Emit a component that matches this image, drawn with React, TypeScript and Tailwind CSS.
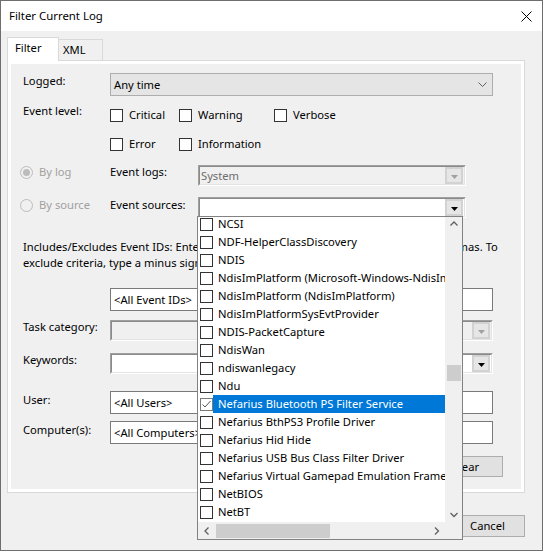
import React from "react";

const items = [
  "NCSI",
  "NDF-HelperClassDiscovery",
  "NDIS",
  "NdisImPlatform (Microsoft-Windows-NdisImPlatform)",
  "NdisImPlatform (NdisImPlatform)",
  "NdisImPlatformSysEvtProvider",
  "NDIS-PacketCapture",
  "NdisWan",
  "ndiswanlegacy",
  "Ndu",
  "Nefarius Bluetooth PS Filter Service",
  "Nefarius BthPS3 Profile Driver",
  "Nefarius Hid Hide",
  "Nefarius USB Bus Class Filter Driver",
  "Nefarius Virtual Gamepad Emulation Framework",
  "NetBIOS",
  "NetBT",
];

function Box({ checked = false, gray = false }: { checked?: boolean; gray?: boolean }) {
  return (
    <span
      className={
        gray
          ? "w-[13px] h-[13px] border border-[#7a7a7a] bg-white flex items-center justify-center shrink-0"
          : "w-[13px] h-[13px] border border-[#333333] bg-white flex items-center justify-center shrink-0"
      }
    >
      {checked && (
        <svg width="11" height="11" viewBox="0 0 11 11">
          <polyline points="1.5,5.5 4,8 9.5,2" fill="none" stroke="#555555" strokeWidth="1" />
        </svg>
      )}
    </span>
  );
}

function Check({ label, w }: { label: string; w: string }) {
  return (
    <div className={`flex items-center gap-[6px] h-[16px] ${w}`}>
      <Box />
      <span>{label}</span>
    </div>
  );
}

function DropBtn({ disabled = false }: { disabled?: boolean }) {
  return (
    <span className="w-[18px] h-[17px] bg-[#d2d2d2] p-[2px] flex shrink-0 mr-[1px]">
      <span className="flex-1 bg-[#e6e6e6] flex items-center justify-center pt-[2px]">
        <svg width="7" height="4" viewBox="0 0 7 4">
          <polygon points="0,0 7,0 3.5,4" fill={disabled ? "#a0a0a0" : "#000000"} />
        </svg>
      </span>
    </span>
  );
}

function Combo3D({
  text = "",
  disabled = false,
  w,
  mt = "",
}: {
  text?: string;
  disabled?: boolean;
  w: string;
  mt?: string;
}) {
  return (
    <div className={`${w} ${mt} h-[21px] border-t border-l border-t-[#a0a0a0] border-l-[#a0a0a0] border-r border-b border-r-white border-b-white shrink-0`}>
      <div
        className={
          disabled
            ? "h-full border-t border-l border-t-[#8a8a8a] border-l-[#8a8a8a] border-r border-b border-r-[#e3e3e3] border-b-[#e3e3e3] bg-[#f0f0f0] flex items-center justify-between"
            : "h-full border-t border-l border-t-[#8a8a8a] border-l-[#8a8a8a] border-r border-b border-r-[#e3e3e3] border-b-[#e3e3e3] bg-white flex items-center justify-between"
        }
      >
        <span className="pl-[1px] text-[#6d6d6d]">{text}</span>
        <DropBtn disabled={disabled} />
      </div>
    </div>
  );
}

function Radio({ checked = false, label }: { checked?: boolean; label: string }) {
  return (
    <div className="flex items-center gap-[6px] h-[16px] w-[90px] text-[#a0a0a0]">
      <span className="w-[13px] h-[13px] rounded-full border border-[#bcbcbc] bg-[#f0f0f0] flex items-center justify-center shrink-0">
        {checked && <span className="w-[7px] h-[7px] rounded-full bg-[#bcbcbc]" />}
      </span>
      <span>{label}</span>
    </div>
  );
}

function TextInput({ text, mt = "" }: { text: string; mt?: string }) {
  return (
    <div className={`w-[383px] h-[23px] border border-[#7a7a7a] bg-white pl-[3px] flex items-center shrink-0 ${mt}`}>
      {text}
    </div>
  );
}

function Chevron({ dir }: { dir: "up" | "down" | "left" | "right" }) {
  const pts =
    dir === "up"
      ? "0.5,4.5 4,1 7.5,4.5"
      : dir === "down"
      ? "0.5,1 4,4.5 7.5,1"
      : dir === "left"
      ? "4.5,0.5 1,4 4.5,7.5"
      : "1,0.5 4.5,4 1,7.5";
  const horiz = dir === "up" || dir === "down";
  return (
    <svg width={horiz ? 8 : 6} height={horiz ? 6 : 8} viewBox={horiz ? "0 0 8 6" : "0 0 6 8"}>
      <polyline points={pts} fill="none" stroke="#606060" strokeWidth="1.3" />
    </svg>
  );
}

export default function App() {
  return (
    <div className="w-[543px] h-[551px] bg-[#f0f0f0] border border-[#6e6e6e] relative overflow-hidden font-['Noto_Sans',sans-serif] text-[11.2px] leading-[16px] text-black">
      {/* Title bar */}
      <div className="h-[30px] bg-white flex items-center justify-between pl-[8px] pr-[10px]">
        <span className="text-[11.4px]">Filter Current Log</span>
        <svg width="11" height="11" viewBox="0 0 11 11">
          <line x1="0.5" y1="0.5" x2="10.5" y2="10.5" stroke="#000" strokeWidth="1" />
          <line x1="10.5" y1="0.5" x2="0.5" y2="10.5" stroke="#000" strokeWidth="1" />
        </svg>
      </div>

      {/* Tabs */}
      <div className="pl-[6px] pt-[6px]">
        <div className="flex items-end h-[23px]">
          <div className="w-[52px] h-[24px] bg-white border border-b-0 border-[#d9d9d9] pl-[7px] pt-[2px] relative z-10 -mb-px">
            Filter
          </div>
          <div className="w-[44px] h-[21px] bg-[#f0f0f0] border border-b-0 border-l-0 border-[#d9d9d9] pl-[4px] pt-[2px]">
            XML
          </div>
        </div>
        <div className="w-[518px] h-[433px] border border-[#d9d9d9] bg-white p-[3px]">
          <div className="h-full bg-[#f0f0f0] flex flex-col">
            {/* Logged */}
            <div className="flex items-start mt-[9px]">
              <div className="w-[99px] pl-[12px]">Logged:</div>
              <div className="w-[383px] h-[23px] border border-[#adadad] bg-[#e5e5e5] pl-[3px] pr-[5px] flex items-center justify-between">
                <span>Any time</span>
                <svg width="9" height="5" viewBox="0 0 9 5">
                  <polyline points="0.5,0.5 4.5,4.5 8.5,0.5" fill="none" stroke="#606060" strokeWidth="1" />
                </svg>
              </div>
            </div>

            {/* Event level */}
            <div className="flex items-start mt-[7px]">
              <div className="w-[99px] pl-[12px]">Event level:</div>
              <div className="flex flex-col mt-[4px] gap-[13px]">
                <div className="flex">
                  <Check label="Critical" w="w-[69px]" />
                  <Check label="Warning" w="w-[95px]" />
                  <Check label="Verbose" w="w-[80px]" />
                </div>
                <div className="flex">
                  <Check label="Error" w="w-[69px]" />
                  <Check label="Information" w="w-[95px]" />
                </div>
              </div>
            </div>

            {/* By log */}
            <div className="flex items-start mt-[12px] pl-[9px]">
              <Radio checked label="By log" />
              <div className="w-[88px]">Event logs:</div>
              <Combo3D text="System" disabled w="w-[268px]" mt="mt-[1px]" />
            </div>

            {/* By source */}
            <div className="flex items-start mt-[11px] pl-[9px]">
              <Radio label="By source" />
              <div className="w-[88px]">Event sources:</div>
              <Combo3D w="w-[268px]" />
            </div>

            {/* Description */}
            <div className="mt-[21px] pl-[12px] whitespace-nowrap overflow-hidden">
              <div className="w-[470px] text-justify [text-align-last:justify]">
                Includes/Excludes Event IDs: Enter ID numbers and/or ID ranges separated by commas. To
              </div>
              <div>exclude criteria, type a minus sign first. For example 1,3,5-99,-76</div>
            </div>

            {/* Event IDs */}
            <div className="flex mt-[17px] pl-[99px]">
              <TextInput text="<All Event IDs>" />
            </div>

            {/* Task category */}
            <div className="flex items-start mt-[8px]">
              <div className="w-[99px] pl-[12px]">Task category:</div>
              <Combo3D disabled w="w-[383px]" mt="mt-[1px]" />
            </div>

            {/* Keywords */}
            <div className="flex items-start mt-[11px]">
              <div className="w-[99px] pl-[12px]">Keywords:</div>
              <Combo3D w="w-[383px]" mt="mt-[1px]" />
            </div>

            {/* User */}
            <div className="flex items-start mt-[17px]">
              <div className="w-[99px] pl-[12px] mt-[1px]">User:</div>
              <TextInput text="<All Users>" />
            </div>

            {/* Computer */}
            <div className="flex items-start mt-[7px]">
              <div className="w-[99px] pl-[12px] mt-[1px]">Computer(s):</div>
              <TextInput text="<All Computers>" />
            </div>

            {/* Clear */}
            <div className="flex justify-end mt-[12px] pr-[18px]">
              <div className="w-[75px] h-[21px] border border-[#adadad] bg-[#e1e1e1] flex items-center justify-center">
                Clear
              </div>
            </div>
          </div>
        </div>
      </div>

      {/* Bottom buttons */}
      <div className="flex justify-end gap-[6px] pr-[17px] mt-[22px]">
        <div className="w-[75px] h-[22px] border border-[#0078d7] bg-[#e1e1e1] flex items-center justify-center">OK</div>
        <div className="w-[75px] h-[22px] border border-[#adadad] bg-[#e1e1e1] flex items-center justify-center">Cancel</div>
      </div>

      {/* Dropped-down list */}
      <div className="absolute left-[196px] top-[215px] w-[266px] h-[324px] border border-[#828282] bg-white flex flex-col">
        <div className="flex h-[305px]">
          <div className="w-[247px] h-full overflow-hidden">
            <div className="-mt-[2px]">
              {items.map((it, i) => {
                const sel = i === 10;
                return (
                  <div key={it} className="h-[18px] flex items-center pl-[2px]">
                    <Box checked={sel} gray={sel} />
                    <span
                      className={
                        sel
                          ? "flex-1 h-full flex items-center pl-[5px] whitespace-nowrap overflow-hidden bg-[#0078d7] text-white"
                          : "flex-1 h-full flex items-center pl-[5px] whitespace-nowrap overflow-hidden"
                      }
                    >
                      {it}
                    </span>
                  </div>
                );
              })}
            </div>
          </div>
          <div className="w-[17px] h-full bg-[#f0f0f0] flex flex-col items-center">
            <div className="h-[14px] w-full flex items-center justify-center">
              <Chevron dir="up" />
            </div>
            <div className="h-[134px]" />
            <div className="h-[16px] w-[14px] bg-[#cdcdcd]" />
            <div className="flex-1" />
            <div className="h-[14px] w-full flex items-center justify-center">
              <Chevron dir="down" />
            </div>
          </div>
        </div>
        <div className="flex h-[17px] bg-[#f0f0f0]">
          <div className="w-[247px] h-full flex items-center">
            <div className="w-[17px] h-full flex items-center justify-center">
              <Chevron dir="left" />
            </div>
            <div className="w-[114px] h-[14px] bg-[#cdcdcd] ml-[1px]" />
            <div className="flex-1" />
            <div className="w-[17px] h-full flex items-center justify-center">
              <Chevron dir="right" />
            </div>
          </div>
          <div className="w-[17px] h-full" />
        </div>
      </div>
    </div>
  );
}
